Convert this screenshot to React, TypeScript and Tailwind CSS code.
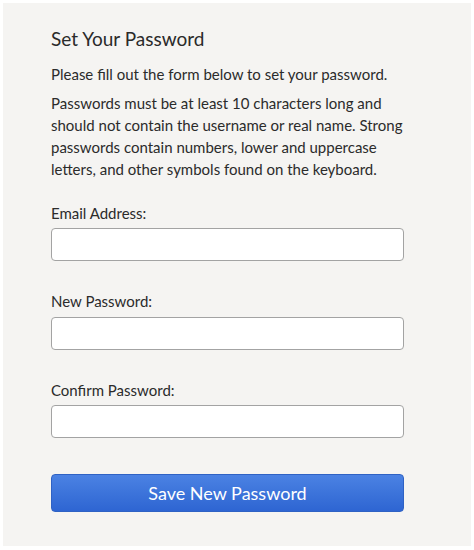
export default function App() {
  return (
    <div className="min-h-[550px] bg-white p-[3px]" style={{ fontFamily: "Lato, 'Open Sans', sans-serif" }}>
      <div className="bg-[#f5f4f2] pl-[48px] pr-[67px] pt-[22px] pb-[34px] text-[#2b2b2b]">
        <h1 className="text-[19px] leading-[28px] text-[#2a2a2a]">Set Your Password</h1>
        <p className="mt-[10px] text-[15px] leading-[22px]">
          Please fill out the form below to set your password.
        </p>
        <p className="mt-[7px] text-[15px] leading-[22px]">
          Passwords must be at least 10 characters long and should not contain the username or real name. Strong
          passwords contain numbers, lower and uppercase letters, and other symbols found on the keyboard.
        </p>

        <form className="mt-[22px] flex flex-col" onSubmit={(e) => e.preventDefault()}>
          <label className="text-[15px] leading-[22px]">Email Address:</label>
          <input
            type="email"
            className="mt-[4px] h-[33px] w-full rounded-[4px] border border-[#a3a3a3] bg-white px-2 outline-none"
          />

          <label className="mt-[29px] text-[15px] leading-[22px]">New Password:</label>
          <input
            type="password"
            className="mt-[5px] h-[33px] w-full rounded-[4px] border border-[#a3a3a3] bg-white px-2 outline-none"
          />

          <label className="mt-[29px] text-[15px] leading-[22px]">Confirm Password:</label>
          <input
            type="password"
            className="mt-[4px] h-[33px] w-full rounded-[4px] border border-[#a3a3a3] bg-white px-2 outline-none"
          />

          <button
            type="submit"
            className="mt-[36px] h-[38px] w-full rounded-[4px] border border-[#2f62c4] bg-gradient-to-b from-[#4b82e3] to-[#2e65d2] text-[18px] text-white"
          >
            Save New Password
          </button>
        </form>
      </div>
    </div>
  );
}
